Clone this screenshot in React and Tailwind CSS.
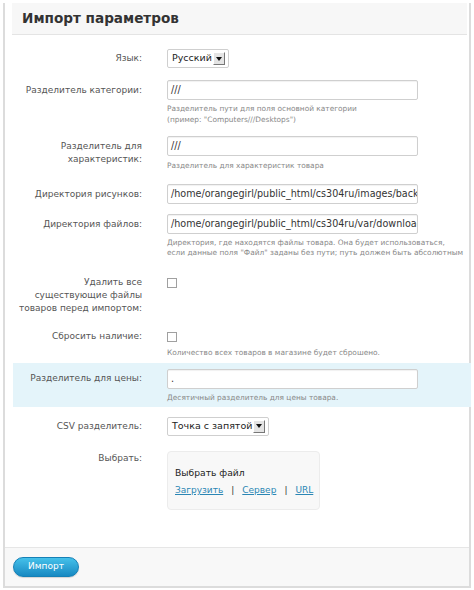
import React from 'react'

const font = { fontFamily: '"DejaVu Sans", Verdana, sans-serif' }

function Label({ children, className = '' }) {
  return (
    <div className={`w-[129px] shrink-0 text-right text-[9px] leading-[13px] text-[#555] ${className}`}>
      {children}
    </div>
  )
}

function TextInput({ value }) {
  return (
    <div className="w-[251px] h-[20px] border border-[#cfcfcf] rounded-[2px] bg-white px-[3px] text-[9.6px] leading-[18px] text-[#333] overflow-hidden whitespace-nowrap shadow-[inset_0_1px_1px_rgba(0,0,0,0.06)]">
      {value}
    </div>
  )
}

function Select({ value, width }) {
  return (
    <div className={`${width} h-[19px] border border-[#cfcfcf] rounded-[2px] bg-white flex items-center pl-[4px] pr-[3px] justify-between`}>
      <span className="text-[9.5px] text-[#222] whitespace-nowrap">{value}</span>
      <span className="w-[12px] h-[13px] bg-[#e4e4e4] border border-[#777] border-l-white border-t-white flex items-center justify-center">
        <svg width="6" height="4" viewBox="0 0 6 4"><path d="M0 0h6L3 4z" fill="#111" /></svg>
      </span>
    </div>
  )
}

function Help({ children }) {
  return <div className="text-[7.4px] leading-[10.5px] text-[#888] whitespace-nowrap">{children}</div>
}

function Checkbox() {
  return <div className="w-[10px] h-[10px] border border-[#a0a0a0] bg-white" />
}

export default function App() {
  return (
    <div className="w-[474px] h-[590px] bg-white pt-[3px] pl-[3px] pr-[3px] pb-[2px]" style={font}>
      <div className="h-full border-l-2 border-r-2 border-b-2 border-[#dcdcdc] flex flex-col">
        {/* Header */}
        <div className="ml-[7px] mr-[2px] h-[32px] bg-[#f7f7f7] border-b border-[#e4e4e4] flex items-center pl-[10px]">
          <h1 className="text-[13.6px] font-bold text-[#333]">Импорт параметров</h1>
        </div>

        {/* Form */}
        <div className="flex-1 ml-[8px]">
          <div className="flex items-center mt-[14px]">
            <Label>Язык:</Label>
            <div className="ml-[25px]"><Select value="Русский" width="w-[62px]" /></div>
          </div>

          <div className="flex mt-[12px]">
            <Label className="pt-[4px]">Разделитель категории:</Label>
            <div className="ml-[25px]">
              <TextInput value="///" />
              <div className="mt-[4px]">
                <Help>Разделитель пути для поля основной категории</Help>
                <Help>(пример: "Computers///Desktops")</Help>
              </div>
            </div>
          </div>

          <div className="flex mt-[11px]">
            <Label className="pt-[4px]">Разделитель для характеристик:</Label>
            <div className="ml-[25px]">
              <TextInput value="///" />
              <div className="mt-[5px]">
                <Help>Разделитель для характеристик товара</Help>
              </div>
            </div>
          </div>

          <div className="flex mt-[12px]">
            <Label className="pt-[4px]">Директория рисунков:</Label>
            <div className="ml-[25px]">
              <TextInput value="/home/orangegirl/public_html/cs304ru/images/backup" />
            </div>
          </div>

          <div className="flex mt-[10px]">
            <Label className="pt-[4px]">Директория файлов:</Label>
            <div className="ml-[25px]">
              <TextInput value="/home/orangegirl/public_html/cs304ru/var/downloads" />
              <div className="mt-[4px]">
                <Help>Директория, где находятся файлы товара. Она будет использоваться,</Help>
                <Help>если данные поля "Файл" заданы без пути; путь должен быть абсолютным</Help>
              </div>
            </div>
          </div>

          <div className="flex mt-[17px]">
            <Label className="leading-[13.5px]">Удалить все существующие файлы товаров перед импортом:</Label>
            <div className="ml-[25px] pt-[2px]">
              <Checkbox />
            </div>
          </div>

          <div className="flex mt-[15px]">
            <Label>Сбросить наличие:</Label>
            <div className="ml-[25px] pt-[2px]">
              <Checkbox />
              <div className="mt-[6px]">
                <Help>Количество всех товаров в магазине будет сброшено.</Help>
              </div>
            </div>
          </div>

          <div className="flex mt-[5px] bg-[#e4f4fa] pt-[6px] pb-[3px] mr-[-2px]">
            <Label className="pt-[3px]">Разделитель для цены:</Label>
            <div className="ml-[25px]">
              <TextInput value="." />
              <div className="mt-[4px]">
                <Help>Десятичный разделитель для цены товара.</Help>
              </div>
            </div>
          </div>

          <div className="flex items-center mt-[10px]">
            <Label>CSV разделитель:</Label>
            <div className="ml-[25px]"><Select value="Точка с запятой" width="w-[102px]" /></div>
          </div>

          <div className="flex mt-[15px]">
            <Label className="pt-[1px]">Выбрать:</Label>
            <div className="ml-[25px]">
              <div className="w-[153px] h-[59px] bg-[#f8f8f8] border border-[#ececec] rounded-[4px] px-[7px] pt-[14px]">
                <div className="text-[9.2px] text-[#222]">Выбрать файл</div>
                <div className="mt-[5px] flex items-center text-[9px]">
                  <a href="#" className="text-[#2b86b4] underline">Загрузить</a>
                  <span className="mx-[8px] text-[#333]">|</span>
                  <a href="#" className="text-[#2b86b4] underline">Сервер</a>
                  <span className="mx-[8px] text-[#333]">|</span>
                  <a href="#" className="text-[#2b86b4] underline">URL</a>
                </div>
              </div>
            </div>
          </div>
        </div>

        {/* Footer */}
        <div className="h-[39px] bg-[#f8f8f8] border-t border-[#e6e6e6] flex items-center pl-[8px]">
          <button className="w-[66px] h-[20px] rounded-full bg-gradient-to-b from-[#45c1ea] to-[#1689c2] border border-[#1580b6] text-white text-[9px] shadow-[0_1px_1px_rgba(0,0,0,0.15)]">
            Импорт
          </button>
        </div>
      </div>
    </div>
  )
}
